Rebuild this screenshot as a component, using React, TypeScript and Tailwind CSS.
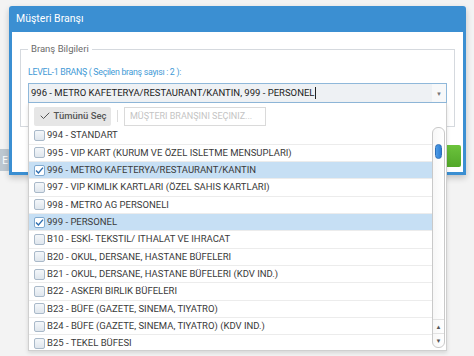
import { Check } from "lucide-react";

const items = [
  { code: "994", name: "STANDART" },
  { code: "995", name: "VIP KART (KURUM VE ÖZEL ISLETME MENSUPLARI)" },
  { code: "996", name: "METRO KAFETERYA/RESTAURANT/KANTIN", checked: true },
  { code: "997", name: "VIP KIMLIK KARTLARI (ÖZEL SAHIS KARTLARI)" },
  { code: "998", name: "METRO AG PERSONELI" },
  { code: "999", name: "PERSONEL", checked: true },
  { code: "B10", name: "ESKİ- TEKSTIL/ ITHALAT VE IHRACAT" },
  { code: "B20", name: "OKUL, DERSANE, HASTANE BÜFELERI" },
  { code: "B21", name: "OKUL, DERSANE, HASTANE BÜFELERI (KDV IND.)" },
  { code: "B22", name: "ASKERI BIRLIK BÜFELERI" },
  { code: "B23", name: "BÜFE (GAZETE, SINEMA, TIYATRO)" },
  { code: "B24", name: "BÜFE (GAZETE, SINEMA, TIYATRO) (KDV IND.)" },
  { code: "B25", name: "TEKEL BÜFESI" },
];

const CheckBox = ({ checked }: { checked?: boolean }) => (
  <span
    className={`flex h-[11px] w-[11px] shrink-0 items-center justify-center rounded-[2px] border ${
      checked
        ? "border-[#7fa9cf] bg-white"
        : "border-[#a9b9c9] bg-gradient-to-b from-[#f4f7fa] to-[#dfe6ed]"
    }`}
  >
    {checked && (
      <svg width="9" height="9" viewBox="0 0 9 9">
        <path d="M1 4.6 L3.4 7 L8 1.6" fill="none" stroke="#2f6fb0" strokeWidth="1.4" />
      </svg>
    )}
  </span>
);

const ScrollBar = () => (
  <div className="mb-[2px] mr-[1px] flex w-[13px] shrink-0 flex-col rounded-[6px] border border-[#c9c9c9] bg-gradient-to-r from-[#f7f7f7] to-white">
    <div className="relative flex-1">
      <div className="absolute left-[2px] top-[16px] h-[15px] w-[7px] rounded-[4px] border border-[#2d6fb8] bg-gradient-to-r from-[#4d9be6] to-[#2f7fd3]" />
    </div>
    <div className="flex h-[14px] items-center justify-center border-t border-[#e2e2e2] text-[6px] leading-none text-[#555]">
      ▲
    </div>
    <div className="flex h-[14px] items-center justify-center border-t border-[#e2e2e2] text-[6px] leading-none text-[#555]">
      ▼
    </div>
  </div>
);

export default function App() {
  return (
    <div
      className="relative h-[356px] w-[474px] overflow-hidden bg-[#f3f3f3]"
      style={{ fontFamily: "Roboto, 'Noto Sans', sans-serif" }}
    >
      {/* page content behind the dialog */}
      <div className="pt-[149px]">
        <div className="flex h-[22px] w-[10px] items-center justify-end rounded-r-[2px] bg-[#bcc7d0] pr-[2px] text-[10px] text-white">
          E
        </div>
      </div>

      {/* dialog */}
      <div className="absolute left-[9px] top-[6px] flex h-[169px] w-[457px] flex-col rounded-t-[3px] bg-[#3b8fd2] shadow-[0_3px_6px_rgba(0,0,0,0.2)]">
        <div className="flex h-[26px] items-center px-[7px] text-[10.5px] text-white">
          Müşteri Branşı
        </div>
        <div className="mx-[3px] mb-[3px] flex flex-1 flex-col bg-white">
          <fieldset className="relative mx-[8px] mt-[10px] h-[85px] border border-[#d5d9de] px-[7px] pb-0">
            <legend className="px-[3px] text-[9.5px] text-[#6b6b6b]">
              Branş Bilgileri
            </legend>
            <div className="mt-[10px] text-[8.8px] leading-[12px] tracking-[-0.3px] text-[#3f9ad6]">
              LEVEL-1 BRANŞ ( Seçilen branş sayısı : 2 ):
            </div>
            <div className="relative mt-[5px]">
              <div className="flex h-[20px] items-center border border-[#8fb8da] bg-[#eef1f4] pl-[2px] text-[9.5px] text-[#222]">
                <span>996 - METRO KAFETERYA/RESTAURANT/KANTIN, 999 - PERSONEL</span>
                <span className="ml-[1px] h-[12px] w-px bg-[#222]" />
                <span className="ml-auto flex h-full w-[14px] items-center justify-center bg-[#f7f8f9] text-[6px] text-[#777]">
                  ▼
                </span>
              </div>

              {/* dropdown panel */}
              <div className="absolute left-0 right-0 top-[20px] z-10 flex h-[248px] flex-col border border-t-0 border-[#cfcfcf] bg-white shadow-[0_2px_4px_rgba(0,0,0,0.12)]">
                <div className="flex h-[24px] shrink-0 items-center gap-[6px] pl-[5px] pt-[2px]">
                  <button className="flex h-[19px] w-[77px] items-center justify-center gap-[3px] rounded-[2px] bg-[#e6e6e6] text-[9.5px] font-medium text-[#555]">
                    <Check size={12} strokeWidth={2} className="text-[#555]" />
                    Tümünü Seç
                  </button>
                  <span className="h-[12px] w-px bg-[#dcdcdc]" />
                  <div className="flex h-[19px] w-[142px] items-center border border-[#dadada] px-[5px] text-[9px] text-[#c4c4c4]">
                    MÜŞTERI BRANŞINI SEÇINIZ...
                  </div>
                </div>
                <div className="flex min-h-0 flex-1">
                  <div className="min-w-0 flex-1 overflow-hidden pt-[3px]">
                    <div className="-mt-[3px]">
                      {items.map((it) => (
                        <div
                          key={it.code}
                          className={`flex h-[17.35px] items-center gap-[2px] border-b border-[#ececec] pl-[5px] text-[9.5px] text-[#3a3a3a] ${
                            it.checked ? "bg-[#c6dff4]" : ""
                          }`}
                        >
                          <CheckBox checked={it.checked} />
                          <span className="whitespace-nowrap">
                            {it.code} - {it.name}
                          </span>
                        </div>
                      ))}
                    </div>
                  </div>
                  <ScrollBar />
                </div>
              </div>
            </div>
          </fieldset>
          <div className="mr-[2px] mt-[18px] flex justify-end">
            <button className="h-[22px] w-[60px] rounded-[2px] bg-gradient-to-b from-[#6cc33c] to-[#52a82a]" />
          </div>
        </div>
      </div>
    </div>
  );
}
